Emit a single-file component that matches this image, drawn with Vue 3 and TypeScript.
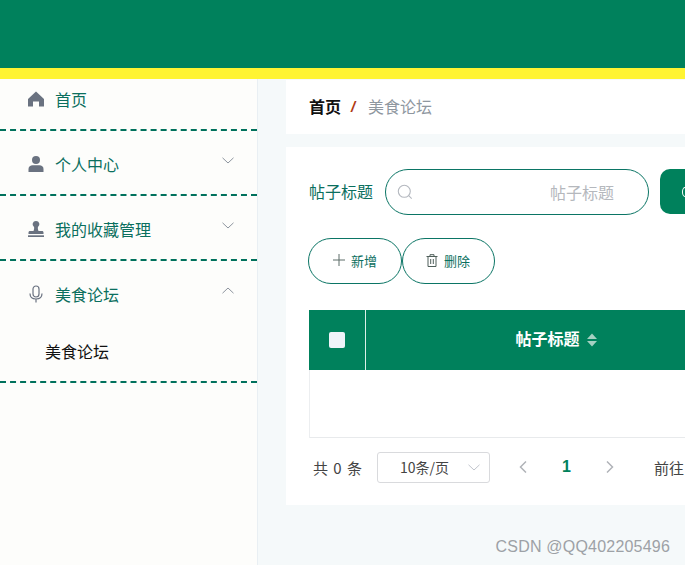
<script setup lang="ts">
interface MenuItem { label: string; icon: string; arrow?: 'down' | 'up' }
const menu: MenuItem[] = [
  { label: '首页', icon: 'home' },
  { label: '个人中心', icon: 'user', arrow: 'down' },
  { label: '我的收藏管理', icon: 'stamp', arrow: 'down' },
  { label: '美食论坛', icon: 'mic', arrow: 'up' },
]
</script>

<template>
  <div class="page">
    <header class="topbar"></header>
    <div class="body">
      <aside class="side">
        <div v-for="m in menu" :key="m.label" class="group" :class="'g-' + m.icon">
          <div class="item">
            <svg class="mi" viewBox="0 0 18 18" width="18" height="18">
              <path v-if="m.icon === 'home'" d="M9 1.500 17 9v7.500h-5v-5H6v5H1V9z" fill="#6a7280" />
              <g v-else-if="m.icon === 'user'" fill="#6a7280">
                <circle cx="9" cy="5" r="4" />
                <path d="M1.500 17v-3c0-2.400 2-3.700 4-3.700h7c2 0 4 1.300 4 3.700v3z" />
              </g>
              <g v-else-if="m.icon === 'stamp'" fill="#6a7280">
                <path d="M9 1a3.300 3.300 0 0 1 2 6c-.4 1 0 2.500.5 4h3.500c1 0 1.500.6 1.500 1.500V14h-15v-1.500c0-.9.5-1.500 1.500-1.500h3.500c.5-1.500.9-3 .5-4a3.300 3.300 0 0 1 2-6z" />
                <rect x="1" y="15.300" width="16" height="1.700" />
              </g>
              <g v-else fill="none" stroke="#6a7280" stroke-width="1.200">
                <rect x="6" y="1" width="6" height="11" rx="3" />
                <path d="M3 8.500c0 3.500 2.500 5.500 6 5.500s6-2 6-5.500M9 14v3.500" />
              </g>
            </svg>
            <span class="label">{{ m.label }}</span>
            <svg v-if="m.arrow" class="arrow" viewBox="0 0 12 7" width="12" height="7">
              <path :d="m.arrow === 'down' ? 'M.5.800 6 6l5.500-5.200' : 'M.5 6.200 6 1l5.500 5.200'" fill="none" stroke="#8d949e" stroke-width="1" />
            </svg>
          </div>
          <div v-if="m.arrow === 'up'" class="sub">美食论坛</div>
        </div>
      </aside>
      <main class="main">
        <nav class="crumbs">
          <b>首页</b><i>/</i><span>美食论坛</span>
        </nav>
        <section class="card">
          <div class="search">
            <span class="search-label">帖子标题</span>
            <div class="input">
              <svg viewBox="0 0 16 16" width="16" height="16">
                <circle cx="7.300" cy="7.300" r="6" fill="none" stroke="#b4b8bf" stroke-width="1.100" />
                <path d="m11.700 11.700 3 3" stroke="#b4b8bf" stroke-width="1.100" />
              </svg>
              <span>帖子标题</span>
            </div>
            <button class="go"><span class="go-icon"></span></button>
          </div>
          <div class="actions">
            <button class="pill">
              <svg viewBox="0 0 12 12" width="12" height="12"><path d="M6 0v12M0 6h12" stroke="#5d6d68" stroke-width="1" /></svg>
              新增
            </button>
            <button class="pill">
              <svg viewBox="0 0 12 13" width="12" height="13"><path d="M.5 2.500h11M4 2.500V.7h4v1.800M2 2.500v10h8v-10M4.700 5v5M7.300 5v5" fill="none" stroke="#4f5f5a" stroke-width="1" /></svg>
              删除
            </button>
          </div>
          <div class="table">
            <div class="thead">
              <div class="th-check"><span class="check"></span></div>
              <div class="th-title">
                帖子标题
                <svg class="sort" viewBox="0 0 10 14" width="10" height="14">
                  <path d="M5 .5 10 6H0z" fill="#a6d0c2" /><path d="M5 13.500 0 8h10z" fill="#a6d0c2" />
                </svg>
              </div>
            </div>
            <div class="tbody"></div>
          </div>
          <div class="pager">
            <span class="total">共 0 条</span>
            <div class="size">
              <span>10条/页</span>
              <svg viewBox="0 0 12 7" width="12" height="7"><path d="M.5.800 6 6l5.500-5.200" fill="none" stroke="#c0c4cc" stroke-width="1" /></svg>
            </div>
            <svg class="nav-a" viewBox="0 0 8 12" width="8" height="12"><path d="M7 .5 1.500 6 7 11.500" fill="none" stroke="#b0b3b8" stroke-width="1.500" /></svg>
            <b class="num">1</b>
            <svg class="nav-b" viewBox="0 0 8 12" width="8" height="12"><path d="M1 .5 6.500 6 1 11.500" fill="none" stroke="#b0b3b8" stroke-width="1.500" /></svg>
            <span class="goto">前往</span>
          </div>
        </section>
      </main>
    </div>
    <div class="mark">CSDN @QQ402205496</div>
  </div>
</template>

<style>
html, body { margin: 0; overflow: hidden; }
</style>

<style scoped>
.page {
  position: relative;
  width: 685px;
  height: 565px;
  overflow: hidden;
  background: #f5f9fa;
  font-family: "Noto Sans CJK SC", "Liberation Sans", sans-serif;
}
.topbar {
  height: 68px;
  background: #00815c;
  border-bottom: 11px solid #fff432;
}
.body { display: flex; height: 486px; }
.side {
  flex: none;
  width: 257px;
  background: #fdfdfb;
  border-right: 1px solid #e9eff3;
}
.group { border-bottom: 2px dashed #00715c; }
.group.g-home { height: 50px; }
.group.g-home .item { height: 40px; }
.group.g-user, .group.g-stamp { height: 63px; }
.group.g-mic { height: 120px; }
.item {
  display: flex;
  align-items: center;
  height: 65px;
  padding-left: 27px;
  padding-right: 23px;
}
.mi { flex: none; margin-right: 10px; }
.label { font-size: 16px; color: #0b6f5e; line-height: 20px; }
.arrow { margin-left: auto; margin-top: -7px; }
.sub { padding-left: 45px; font-size: 16px; line-height: 20px; color: #111; padding-top: 15px; }
.main { flex: 1; min-width: 0; padding: 1px 0 0 28px; }
.crumbs {
  display: flex;
  align-items: center;
  box-sizing: border-box;
  width: 500px;
  height: 54px;
  padding: 0 0 2px 23px;
  background: #fff;
  font-size: 16px;
}
.crumbs b { font-weight: 700; color: #111; }
.crumbs i {
  width: 7px;
  margin: 0 10px 0 10px;
  color: #b03a14;
  font: italic 700 15px "Liberation Sans", sans-serif;
}
.crumbs span { color: #8f979f; }
.card {
  width: 500px;
  height: 358px;
  margin-top: 13px;
  background: #fff;
  padding: 22px 0 0 23px;
  box-sizing: border-box;
}
.search { display: flex; align-items: center; height: 45px; }
.search-label { font-size: 16px; line-height: 20px; margin-top: -2px; color: #0b6f5e; width: 76px; }
.input {
  flex: none;
  display: flex;
  align-items: center;
  justify-content: space-between;
  box-sizing: border-box;
  width: 264px;
  height: 46px;
  padding: 0 34px 0 11px;
  border: 1px solid #0b7565;
  border-radius: 23px;
  font-size: 16px;
  color: #b5b8bd;
}
.go {
  flex: none;
  display: block;
  width: 60px;
  height: 45px;
  margin-left: 11px;
  padding: 0 0 0 22px;
  border: 0;
  border-radius: 10px;
  background: #00815c;
}
.go-icon { display: block; width: 6px; height: 10px; border: 1.500px solid #fff; border-radius: 50%; box-sizing: border-box; }
.actions { display: flex; margin-top: 24px; margin-left: -1px; }
.pill {
  display: flex;
  align-items: center;
  justify-content: center;
  gap: 6px;
  width: 94px;
  height: 46px;
  padding: 0 0 2px;
  background: #fff;
  border: 1px solid #0b7565;
  border-radius: 23px;
  font: 13px "Noto Sans CJK SC", sans-serif;
  color: #0b6f5e;
}
.pill + .pill { width: 93px; padding-right: 1px; }
.table { margin-top: 26px; width: 477px; border-left: 1px solid #eceef0; }
.thead { display: flex; height: 60px; background: #00815c; margin-left: -1px; }
.th-check {
  flex: none;
  display: flex;
  align-items: center;
  justify-content: center;
  width: 56px;
  border-right: 1px solid #dcefe8;
}
.check { width: 16px; height: 16px; border-radius: 2px; background: #eef3f8; }
.th-title {
  flex: none;
  width: 380px;
  display: flex;
  align-items: center;
  justify-content: center;
  gap: 7px;
  font-size: 16px;
  line-height: 20px;
  font-weight: 700;
  color: #fff;
  padding-bottom: 4px;
  box-sizing: border-box;
}
.sort { margin-top: 3px; }
.tbody { height: 67px; border-bottom: 1px solid #e8eaec; }
.pager { display: flex; align-items: center; height: 58px; padding-left: 4px; font-size: 15px; color: #444; }
.total { width: 64px; word-spacing: 2px; }
.size {
  flex: none;
  display: flex;
  align-items: center;
  justify-content: space-between;
  box-sizing: border-box;
  width: 113px;
  height: 31px;
  padding: 0 9px 0 22px;
  border: 1px solid #d9dadd;
  border-radius: 3px;
  font-size: 14px;
  color: #444;
}
.nav-a { margin-left: 29px; }
.num { margin-left: 35px; color: #00815c; font-family: "Liberation Sans", sans-serif; font-size: 16px; }
.nav-b { margin-left: 35px; }
.goto { margin-left: 40px; }
.mark {
  position: absolute;
  right: 15px;
  bottom: 9px;
  font: 16px "Liberation Sans", sans-serif;
  letter-spacing: 0.2px;
  color: #9da1a6;
}
</style>
